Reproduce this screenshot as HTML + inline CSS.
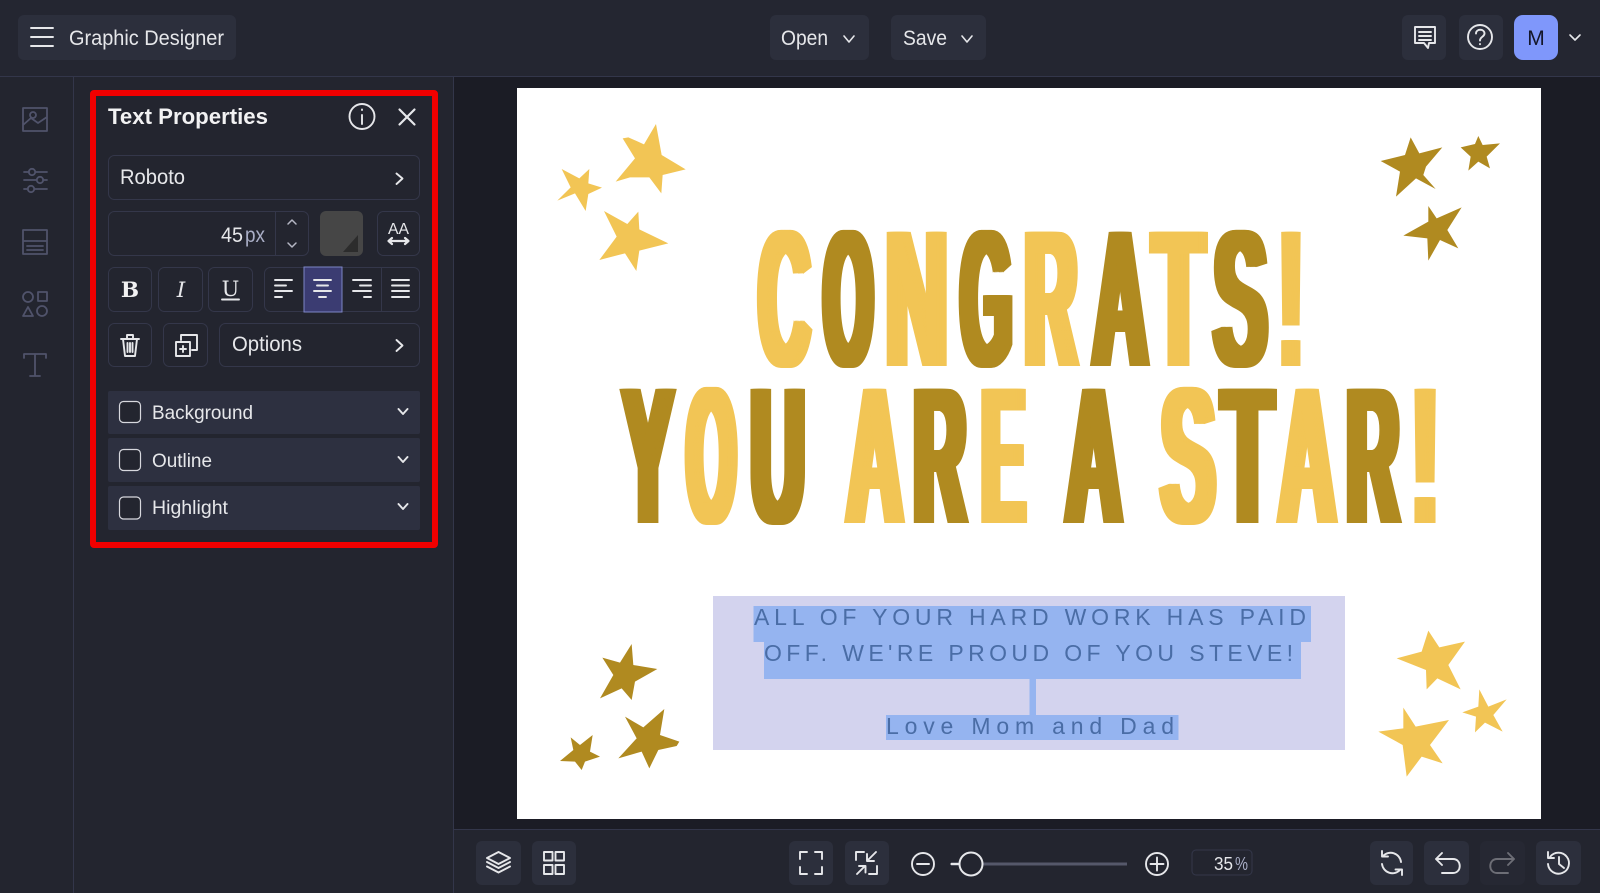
<!DOCTYPE html>
<html lang="en"><head><meta charset="utf-8"><title>Graphic Designer</title>
<style>
html,body{margin:0;padding:0;background:#1b1c25;width:1600px;height:893px;overflow:hidden}
svg{position:absolute;left:0;top:0}
text{font-family:"Liberation Sans",sans-serif;fill:#e6e7ea}
.ln{fill:none;stroke:#e6e7ea;stroke-width:1.9;stroke-linecap:round;stroke-linejoin:round}
.side{fill:none;stroke:#50536b;stroke-width:1.8;stroke-linecap:round;stroke-linejoin:round}
.box{fill:none;stroke:#34374a;stroke-width:1}
.btn{fill:#2c2f3c}
.l{fill:#f2c555}.d{fill:#b08a20}
#h span{position:absolute;font:700 195px/195px "Liberation Sans",sans-serif;transform-origin:0 0;white-space:pre;
--s:calc((var(--w) - 10)/(var(--i)*195));
--d:calc(10px/var(--s));
left:calc((var(--x) - 2.5 - var(--b)*195*var(--s))*1px);
top:calc(var(--y)*1px);
transform:scaleX(var(--s));
text-shadow:calc(var(--d)*.125) 0 0 currentColor,calc(var(--d)*.25) 0 0 currentColor,calc(var(--d)*.375) 0 0 currentColor,calc(var(--d)*.5) 0 0 currentColor,calc(var(--d)*.625) 0 0 currentColor,calc(var(--d)*.75) 0 0 currentColor,calc(var(--d)*.875) 0 0 currentColor,var(--d) 0 0 currentColor}
.a{color:#f2c555}.b{color:#b08a20}
.r1{--y:202}.r2{--y:358.5}
</style></head><body>
<svg width="1600" height="893" viewBox="0 0 1600 893">
<rect width="1600" height="893" fill="#1b1c25"/>
<!-- header -->
<rect width="1600" height="76" fill="#242631"/>
<rect y="76" width="1600" height="1" fill="#33364a"/>
<rect x="0" y="77" width="453" height="816" fill="#23252f"/>
<rect x="73" y="77" width="1" height="816" fill="#33364a"/>
<rect x="453" y="77" width="1" height="816" fill="#33364a"/>
<rect x="454" y="829" width="1146" height="64" fill="#23252f"/>
<rect x="454" y="829" width="1146" height="1" fill="#33364a"/>
<rect x="18" y="15" width="218" height="45" rx="6" class="btn"/>
<path class="ln" d="M31 28H53M31 37H53M31 46H53"/>
<text x="69" y="45" font-size="21" textLength="155" lengthAdjust="spacingAndGlyphs">Graphic Designer</text>
<rect x="770" y="15" width="99" height="45" rx="6" class="btn"/>
<text x="781" y="45" font-size="21" textLength="47" lengthAdjust="spacingAndGlyphs">Open</text>
<path class="ln" d="M844 36L849 42L854 36" style="stroke-width:1.6"/>
<rect x="891" y="15" width="95" height="45" rx="6" class="btn"/>
<text x="903" y="45" font-size="21" textLength="44" lengthAdjust="spacingAndGlyphs">Save</text>
<path class="ln" d="M962 36L967 42L972 36" style="stroke-width:1.6"/>
<rect x="1402" y="15" width="44" height="45" rx="6" class="btn"/>
<path class="ln" d="M1415 27H1435V43H1429L1428 48L1424 43H1415ZM1419 32H1431M1419 36H1431M1419 40H1431"/>
<rect x="1459" y="15" width="44" height="45" rx="6" class="btn"/>
<circle cx="1480" cy="37" r="12" class="ln"/>
<path class="ln" d="M1476 33.500C1476 28.500 1484.500 28.500 1484.500 33.500C1484.500 37 1480 36.500 1480 40.500M1480 44V44.200"/>
<rect x="1514" y="15" width="44" height="45" rx="9" fill="#7f97fb"/>
<text x="1536" y="45" font-size="21" text-anchor="middle" style="fill:#14162a">M</text>
<path class="ln" d="M1570 35L1575 40L1580 35" style="stroke-width:1.6"/>
<!-- sidebar -->
<path class="side" d="M23 108H47V131H23ZM23 125L31 118L38 123L47 117"/>
<circle cx="33" cy="115" r="3" class="side"/>
<path class="side" d="M24 172H29M36 172H47M24 180H36M43 180H47M24 189H28M35 189H47"/>
<circle cx="32" cy="172" r="3.200" class="side"/><circle cx="40" cy="180" r="3.200" class="side"/><circle cx="31" cy="189" r="3.200" class="side"/>
<path class="side" d="M23 230H47V254H23ZM23 241H47M27 246H43M27 250H43"/>
<circle cx="28" cy="297" r="5" class="side"/><rect x="38" y="292" width="9" height="9" class="side"/>
<path class="side" d="M23 316L28 307L33 316Z"/><circle cx="42" cy="311" r="5" class="side"/>
<path class="side" d="M24 358V354H46V358M35 354V376M30 376H40"/>
<!-- panel -->
<rect x="93" y="93" width="342" height="452" rx="1" fill="none" stroke="#f00000" stroke-width="6"/>
<text x="108" y="124" font-size="22.500" font-weight="700" textLength="160" lengthAdjust="spacingAndGlyphs" style="fill:#f2f2f3">Text Properties</text>
<circle cx="362" cy="116.500" r="12.500" class="ln"/>
<path class="ln" d="M362 115V124M362 109.500V110"/>
<path class="ln" d="M399.500 109.500L414.500 124.500M414.500 109.500L399.500 124.500" style="stroke-width:2.2"/>
<rect x="108.500" y="155.500" width="311" height="44" rx="6" class="box"/>
<text x="120" y="184" font-size="21" textLength="65" lengthAdjust="spacingAndGlyphs">Roboto</text>
<path class="ln" d="M396.500 173.500L402.500 178.500L396.500 184"/>
<rect x="108.500" y="211.500" width="200" height="44" rx="6" class="box"/>
<path d="M275.500 212V255" stroke="#34374a"/>
<text x="221" y="242" font-size="21" textLength="22" lengthAdjust="spacingAndGlyphs">45</text>
<text x="245" y="242" font-size="21" textLength="20" lengthAdjust="spacingAndGlyphs" style="fill:#a9aec6">px</text>
<path class="ln" d="M288 224L292 220L296 224M288 243L292 247L296 243" style="stroke:#b5b7c4;stroke-width:1.5"/>
<rect x="320" y="211" width="43" height="45" rx="6" fill="#464646"/>
<path d="M343 252L358 235V252Z" fill="#2c2c2c"/>
<rect x="377.500" y="211.500" width="42" height="44" rx="6" class="box"/>
<text x="388" y="234" font-size="16" textLength="21" lengthAdjust="spacingAndGlyphs">AA</text>
<path class="ln" d="M389 241H408M392 238L388.500 241L392 244M405 238L408.500 241L405 244" style="stroke-width:2.2"/>
<rect x="108.500" y="267.500" width="43" height="44" rx="6" class="box"/>
<rect x="158.500" y="267.500" width="44" height="44" rx="6" class="box"/>
<rect x="208.500" y="267.500" width="44" height="44" rx="6" class="box"/>
<text x="130" y="297" text-anchor="middle" font-size="21.500" font-weight="700" style="font-family:'DejaVu Serif',serif;fill:#f2f2f3">B</text>
<text x="181" y="297" text-anchor="middle" font-size="21.500" font-style="italic" style="font-family:'DejaVu Serif',serif">I</text>
<text x="230.500" y="296" text-anchor="middle" font-size="21" style="font-family:'DejaVu Serif',serif">U</text>
<path class="ln" d="M222 299.500H239"/>
<rect x="264.500" y="267.500" width="155" height="44" rx="6" class="box"/>
<rect x="304" y="267" width="38" height="45" fill="#3b3c72" stroke="#7e86c6" stroke-width="1"/>
<path d="M381.500 268V311" stroke="#34374a"/>
<path class="ln" d="M275 280H292M275 285.500H286M275 291H292M275 297H282"/>
<path class="ln" d="M314 280H331M317 285.500H328M314 291H331M319 297H326"/>
<path class="ln" d="M353 280H371M360 285.500H371M353 291H371M364 297H371"/>
<path class="ln" d="M392 280H409M392 285.500H409M392 291H409M392 297H409"/>
<rect x="108.500" y="323.500" width="43" height="43" rx="6" class="box"/>
<path class="ln" d="M121 339H139M123 339L125 356H135L137 339M127 339V335H133V339M127.500 343V352M130 343V352M132.500 343V352"/>
<rect x="163.500" y="323.500" width="44" height="43" rx="6" class="box"/>
<path class="ln" d="M176 342H190V356H176ZM181 340V335H197V350H192M180 349H186M183 346V352"/>
<rect x="219.500" y="323.500" width="200" height="43" rx="6" class="box"/>
<text x="232" y="351" font-size="21" textLength="70" lengthAdjust="spacingAndGlyphs">Options</text>
<path class="ln" d="M396.500 340L402.500 345.500L396.500 351"/>
<rect x="108" y="391" width="312" height="43" rx="2" fill="#2d3040"/>
<rect x="108" y="438" width="312" height="44" rx="2" fill="#2d3040"/>
<rect x="108" y="486" width="312" height="44" rx="2" fill="#2d3040"/>
<rect x="119.500" y="401.500" width="21" height="21" rx="4" fill="#23252f" stroke="#d7d8de" stroke-width="1.200"/>
<rect x="119.500" y="449.500" width="21" height="21" rx="4" fill="#23252f" stroke="#d7d8de" stroke-width="1.200"/>
<rect x="119.500" y="497" width="21" height="22" rx="4" fill="#23252f" stroke="#d7d8de" stroke-width="1.200"/>
<text x="152" y="419" font-size="19.500" textLength="101" lengthAdjust="spacingAndGlyphs">Background</text>
<text x="152" y="467" font-size="19.500" textLength="60" lengthAdjust="spacingAndGlyphs">Outline</text>
<text x="152" y="514" font-size="19.500" textLength="76" lengthAdjust="spacingAndGlyphs">Highlight</text>
<path class="ln" d="M398.500 409L403 414L407.500 409M398.500 457L403 462L407.500 457M398.500 504L403 509L407.500 504"/>
<!-- card -->
<rect x="517" y="88" width="1024" height="731" fill="#fff"/>
<g transform="translate(520 90) scale(.3333)" class="l">
<polygon points="408,102 425,195 497,238 428,255 424,310 388,262 330,262 287,275 345,205 308,145 325,142 372,163"/>
<polygon points="125,237 178,265 208,237 205,280 246,293 205,312 197,363 165,310 112,332 152,292"/>
<polygon points="252,363 322,402 355,365 358,418 445,460 358,482 349,543 315,490 238,510 290,440"/>
</g>
<g transform="translate(1340 90) scale(.3333)" class="d">
<polygon points="212,142 238,190 307,172 258,230 250,255 287,297 228,265 168,320 180,245 122,213 195,195"/>
<polygon points="415,138 428,165 480,160 440,200 450,235 415,215 385,242 392,200 362,172 405,162"/>
<polygon points="265,348 290,385 365,352 322,420 355,475 300,450 265,512 262,445 190,437 265,395"/>
</g>
<g transform="translate(530 620) scale(.3333)" class="d">
<polygon points="305,72 310,135 382,147 315,185 305,240 275,205 210,235 250,165 217,113 270,128"/>
<polygon points="122,352 150,375 188,345 180,395 210,410 165,425 155,450 135,425 90,423 130,390"/>
<polygon points="285,290 340,322 403,267 390,345 448,365 440,378 385,390 358,445 335,395 265,415 320,355"/>
</g>
<g transform="translate(1350 610) scale(.3333)" class="l">
<polygon points="235,62 268,112 345,95 295,165 332,238 262,205 230,238 228,180 140,145 215,125"/>
<polygon points="388,238 415,290 470,268 430,315 458,365 405,338 375,367 378,320 337,307 385,290"/>
<polygon points="160,293 197,350 297,330 240,405 278,460 215,440 170,500 158,405 85,365 160,355"/>
</g>
<!-- selected text -->
<rect x="713" y="596" width="632" height="154" fill="#d3d3ee"/>
<rect x="753.500" y="606" width="557.500" height="36" fill="#95b4f0"/>
<rect x="764" y="642" width="537" height="37" fill="#95b4f0"/>
<rect x="1029.500" y="679" width="6.500" height="36" fill="#95b4f0"/>
<rect x="886" y="715" width="292.500" height="25" fill="#95b4f0"/>
<g style="font-size:23px">
<text x="754" y="625" textLength="552" style="fill:#4a6da6" lengthAdjust="spacing">ALL OF YOUR HARD WORK HAS PAID</text>
<text x="764" y="661" textLength="529" style="fill:#4a6da6" lengthAdjust="spacing">OFF. WE'RE PROUD OF YOU STEVE!</text>
<text x="886" y="734" textLength="288" style="fill:#4a6da6" lengthAdjust="spacing">Love Mom and Dad</text>
</g>
<!-- bottom toolbar -->
<rect x="476" y="841" width="45" height="44" rx="6" class="btn"/>
<path class="ln" d="M498.500 852L510 858L498.500 864L487 858ZM487 862L498.500 868L510 862M487 866.500L498.500 872.500L510 866.500"/>
<rect x="532" y="841" width="44" height="44" rx="6" class="btn"/>
<path class="ln" d="M544 852H552.500V860.500H544ZM555.500 852H564V860.500H555.500ZM544 865H552.500V874H544ZM555.500 865H564V874H555.500Z"/>
<rect x="789" y="841" width="44" height="44" rx="6" class="btn"/>
<path class="ln" d="M800 859V852H807M815 852H822V859M822 867V874H815M807 874H800V867"/>
<rect x="845" y="841" width="44" height="44" rx="6" class="btn"/>
<path class="ln" d="M856 860V852H864M876 852L867 861M867 854V861H874M877 866V874H869M857 874L865 866M859 866H865.500V872.500"/>
<circle cx="923" cy="864" r="11" class="ln"/>
<path class="ln" d="M917 864H929"/>
<path d="M951 864H1127" stroke="#55586a" stroke-width="3"/>
<circle cx="971" cy="864" r="11.500" fill="#23252f" stroke="#e6e7ea" stroke-width="2"/>
<path class="ln" d="M951.500 864H959" style="stroke-width:2.2"/>
<circle cx="1157" cy="864" r="11" class="ln"/>
<path class="ln" d="M1150.500 864H1163.500M1157 857.500V870.500"/>
<rect x="1192" y="850" width="60" height="25" rx="4" class="box"/>
<text x="1214" y="870" font-size="18" textLength="19" lengthAdjust="spacingAndGlyphs">35</text>
<text x="1235" y="870" font-size="18" textLength="13" lengthAdjust="spacingAndGlyphs" style="fill:#a9aec6">%</text>
<rect x="1370" y="841" width="43" height="44" rx="6" class="btn"/>
<path class="ln" d="M1383 856A10.500 10.500 0 0 1 1401 862M1400 870A10.500 10.500 0 0 1 1382 864M1382 851V856.500H1388M1402 875V869.500H1395.500"/>
<rect x="1424" y="841" width="45" height="44" rx="6" class="btn"/>
<path class="ln" d="M1436 859H1453C1462 859 1462 873 1453 873H1442M1442 853L1436 859L1442 865"/>
<rect x="1480" y="841" width="45" height="44" rx="6" fill="#262833"/>
<path d="M1514 859H1497C1488 859 1488 873 1497 873H1508M1508 853L1514 859L1508 865" fill="none" stroke="#6d6e76" stroke-width="1.900" stroke-linecap="round" stroke-linejoin="round"/>
<rect x="1536" y="841" width="45" height="44" rx="6" class="btn"/>
<path class="ln" d="M1550 857A10.500 10.500 0 1 1 1548 864M1548 852V858H1554M1559 857V864L1564 868"/>
</svg>
<div id="h">
<span class="a r1" style="--x:760;--w:54;--b:.047;--i:.63">C</span>
<span class="b r1" style="--x:824;--w:53;--b:.044;--i:.69">O</span>
<span class="a r1" style="--x:890;--w:59;--b:.073;--i:.576">N</span>
<span class="b r1" style="--x:962;--w:53;--b:.048;--i:.663">G</span>
<span class="a r1" style="--x:1028;--w:56;--b:.073;--i:.643">R</span>
<span class="b r1" style="--x:1090;--w:64;--b:0;--i:.718">A</span>
<span class="a r1" style="--x:1152;--w:58;--b:.017;--i:.576">T</span>
<span class="b r1" style="--x:1214;--w:56;--b:.036;--i:.58">S</span>
<span class="a r1" style="--x:1283;--w:20;--b:.09;--i:.152">!</span>
<span class="b r2" style="--x:620;--w:60;--b:0;--i:.667">Y</span>
<span class="a r2" style="--x:687;--w:53;--b:.044;--i:.69">O</span>
<span class="b r2" style="--x:754;--w:53;--b:.071;--i:.58">U</span>
<span class="a r2" style="--x:844;--w:65;--b:0;--i:.718">A</span>
<span class="b r2" style="--x:917;--w:56;--b:.073;--i:.643">R</span>
<span class="a r2" style="--x:984;--w:45;--b:.073;--i:.548">E</span>
<span class="b r2" style="--x:1063;--w:65;--b:0;--i:.718">A</span>
<span class="a r2" style="--x:1161;--w:57;--b:.036;--i:.58">S</span>
<span class="b r2" style="--x:1221;--w:58;--b:.017;--i:.576">T</span>
<span class="a r2" style="--x:1276;--w:66;--b:0;--i:.718">A</span>
<span class="b r2" style="--x:1350;--w:56;--b:.073;--i:.643">R</span>
<span class="a r2" style="--x:1417;--w:22;--b:.09;--i:.152">!</span>
</div>
</body></html>
